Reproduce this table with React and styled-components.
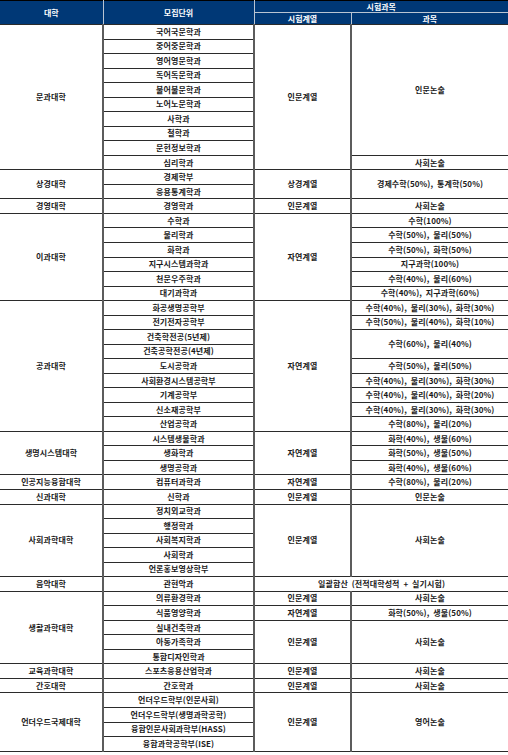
import React from "react";
import styled, { createGlobalStyle } from "styled-components";

const Global = createGlobalStyle`
  html, body { margin: 0; padding: 0; background: #fff; }
  body { font-family: "Noto Sans CJK KR", "Noto Sans", sans-serif; }
`;

const Table = styled.table`
  width: 508px;
  table-layout: fixed;
  border-collapse: collapse;
  border-top: 1px solid #000;
  font-family: "Noto Sans CJK KR", "Noto Sans", sans-serif;
  font-size: 8px;
  line-height: 10px;
  color: #1a1a1a;
`;

const HeadRow = styled.tr`
  height: 12px;
`;

const HeadCell = styled.th`
  background: #003876;
  color: #fff;
  font-weight: 700;
  padding: 0;
  text-align: center;
  vertical-align: middle;
  border-left: 1px solid #b9c4d2;
  border-right: 1px solid #b9c4d2;
  border-bottom: 1px solid #b9c4d2;
  &:first-child { border-left: none; }
  &:last-child { border-right: none; }
`;

const HeadBottomCell = styled(HeadCell)`
  border-bottom: none;
`;

const Row = styled.tr`
  height: 14.54px;
`;

const Cell = styled.td`
  padding: 0;
  text-align: center;
  vertical-align: middle;
  font-weight: 700;
  letter-spacing: 0.1px;
  white-space: pre;
  border-top: 1px solid #2b2b2b;
  border-bottom: 1px solid #2b2b2b;
  border-left: 2px solid #5c5c5c;
  border-right: 2px solid #5c5c5c;
  &:first-child { border-left: none; }
  &:last-child { border-right: none; }
`;

const groups = [
  {
    college: "문과대학",
    majors: ["국어국문학과", "중어중문학과", "영어영문학과", "독어독문학과", "불어불문학과", "노어노문학과", "사학과", "철학과", "문헌정보학과", "심리학과"],
    tracks: [["인문계열", 10]],
    subjects: [["인문논술", 9], ["사회논술", 1]],
  },
  {
    college: "상경대학",
    majors: ["경제학부", "응용통계학과"],
    tracks: [["상경계열", 2]],
    subjects: [["경제수학(50%),  통계학(50%)", 2]],
  },
  {
    college: "경영대학",
    majors: ["경영학과"],
    tracks: [["인문계열", 1]],
    subjects: [["사회논술", 1]],
  },
  {
    college: "이과대학",
    majors: ["수학과", "물리학과", "화학과", "지구시스템과학과", "천문우주학과", "대기과학과"],
    tracks: [["자연계열", 6]],
    subjects: [
      ["수학(100%)", 1],
      ["수학(50%),  물리(50%)", 1],
      ["수학(50%),  화학(50%)", 1],
      ["지구과학(100%)", 1],
      ["수학(40%),  물리(60%)", 1],
      ["수학(40%),  지구과학(60%)", 1],
    ],
  },
  {
    college: "공과대학",
    majors: ["화공생명공학부", "전기전자공학부", "건축학전공(5년제)", "건축공학전공(4년제)", "도시공학과", "사회환경시스템공학부", "기계공학부", "신소재공학부", "산업공학과"],
    tracks: [["자연계열", 9]],
    subjects: [
      ["수학(40%),  물리(30%),  화학(30%)", 1],
      ["수학(50%),  물리(40%),  화학(10%)", 1],
      ["수학(60%),  물리(40%)", 2],
      ["수학(50%),  물리(50%)", 1],
      ["수학(40%),  물리(30%),  화학(30%)", 1],
      ["수학(40%),  물리(40%),  화학(20%)", 1],
      ["수학(40%),  물리(30%),  화학(30%)", 1],
      ["수학(80%),  물리(20%)", 1],
    ],
  },
  {
    college: "생명시스템대학",
    majors: ["시스템생물학과", "생화학과", "생명공학과"],
    tracks: [["자연계열", 3]],
    subjects: [
      ["화학(40%),  생물(60%)", 1],
      ["화학(50%),  생물(50%)", 1],
      ["화학(40%),  생물(60%)", 1],
    ],
  },
  {
    college: "인공지능융합대학",
    majors: ["컴퓨터과학과"],
    tracks: [["자연계열", 1]],
    subjects: [["수학(80%),  물리(20%)", 1]],
  },
  {
    college: "신과대학",
    majors: ["신학과"],
    tracks: [["인문계열", 1]],
    subjects: [["인문논술", 1]],
  },
  {
    college: "사회과학대학",
    majors: ["정치외교학과", "행정학과", "사회복지학과", "사회학과", "언론홍보영상학부"],
    tracks: [["인문계열", 5]],
    subjects: [["사회논술", 5]],
  },
  {
    college: "음악대학",
    majors: ["관현악과"],
    merged: "일괄합산  (전적대학성적  +  실기시험)",
  },
  {
    college: "생활과학대학",
    majors: ["의류환경학과", "식품영양학과", "실내건축학과", "아동가족학과", "통합디자인학과"],
    tracks: [["인문계열", 1], ["자연계열", 1], ["인문계열", 3]],
    subjects: [["사회논술", 1], ["화학(50%),  생물(50%)", 1], ["사회논술", 3]],
  },
  {
    college: "교육과학대학",
    majors: ["스포츠응용산업학과"],
    tracks: [["인문계열", 1]],
    subjects: [["사회논술", 1]],
  },
  {
    college: "간호대학",
    majors: ["간호학과"],
    tracks: [["인문계열", 1]],
    subjects: [["사회논술", 1]],
  },
  {
    college: "언더우드국제대학",
    majors: ["언더우드학부(인문사회)", "언더우드학부(생명과학공학)", "융합인문사회과학부(HASS)", "융합과학공학부(ISE)"],
    tracks: [["인문계열", 4]],
    subjects: [["영어논술", 4]],
  },
];

function startMap(list) {
  const map = {};
  let idx = 0;
  (list || []).forEach(([text, span]) => {
    map[idx] = { text, span };
    idx += span;
  });
  return map;
}

function Group({ g }) {
  const tracks = startMap(g.tracks);
  const subjects = startMap(g.subjects);
  return g.majors.map((m, i) => (
    <Row key={m}>
      {i === 0 && <Cell rowSpan={g.majors.length}>{g.college}</Cell>}
      <Cell>{m}</Cell>
      {g.merged
        ? i === 0 && (
            <Cell colSpan={2} rowSpan={g.majors.length}>
              {g.merged}
            </Cell>
          )
        : null}
      {!g.merged && tracks[i] && <Cell rowSpan={tracks[i].span}>{tracks[i].text}</Cell>}
      {!g.merged && subjects[i] && <Cell rowSpan={subjects[i].span}>{subjects[i].text}</Cell>}
    </Row>
  ));
}

export default function App() {
  return (
    <>
      <Global />
      <Table>
        <colgroup>
          <col style={{ width: 103 }} />
          <col style={{ width: 151 }} />
          <col style={{ width: 97 }} />
          <col style={{ width: 157 }} />
        </colgroup>
        <thead>
          <HeadRow>
            <HeadBottomCell rowSpan={2}>대학</HeadBottomCell>
            <HeadBottomCell rowSpan={2}>모집단위</HeadBottomCell>
            <HeadCell colSpan={2}>시험과목</HeadCell>
          </HeadRow>
          <HeadRow>
            <HeadBottomCell>시험계열</HeadBottomCell>
            <HeadBottomCell>과목</HeadBottomCell>
          </HeadRow>
        </thead>
        <tbody>
          {groups.map((g) => (
            <Group key={g.college} g={g} />
          ))}
        </tbody>
      </Table>
    </>
  );
}
